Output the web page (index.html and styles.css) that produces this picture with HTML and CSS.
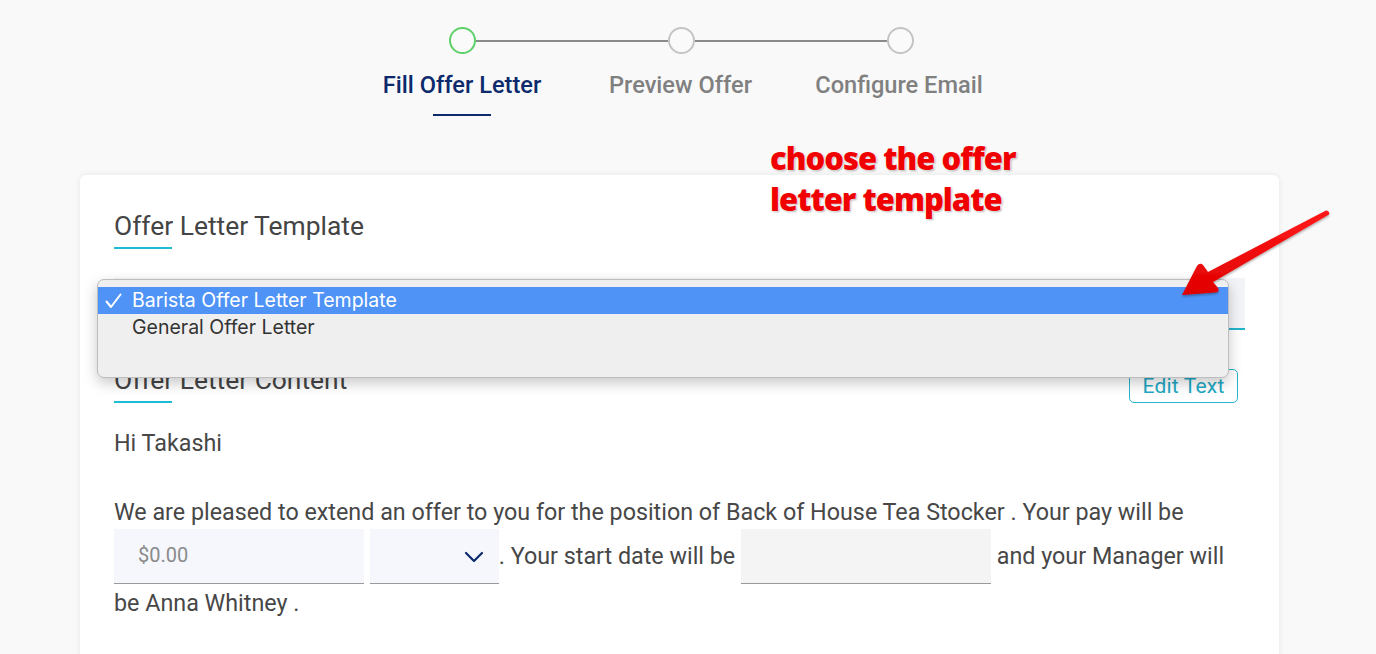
FILE: index.html
```html
<!DOCTYPE html>
<html>
<head>
<meta charset="utf-8">
<link rel="stylesheet" href="styles.css">
</head>
<body>
<div class="page">
  <div class="stepper">
    <div class="track">
      <span class="dot dot-active"></span>
      <span class="link"></span>
      <span class="dot"></span>
      <span class="link"></span>
      <span class="dot"></span>
    </div>
    <div class="labels">
      <div class="label label-active">Fill Offer Letter<span class="bar"></span></div>
      <div class="label">Preview Offer</div>
      <div class="label">Configure Email</div>
    </div>
  </div>

  <div class="card">
    <h2 class="section-title">Offer Letter Template</h2>
    <div class="template-select"></div>

    <div class="content-head">
      <h2 class="section-title">Offer Letter Content</h2>
      <button class="edit-btn">Edit Text</button>
    </div>

    <div class="letter">
      <p class="greet">Hi Takashi</p>
      <p class="body-text">We are pleased to extend an offer to you for the position of Back of House Tea Stocker . Your pay will be <span class="field field-pay">$0.00</span> <span class="field field-unit"><svg class="chev" width="20" height="12" viewBox="0 0 20 12"><path d="M2 2 L10 10 L18 2" fill="none" stroke="#0b2a6a" stroke-width="2.2" stroke-linecap="round" stroke-linejoin="round"/></svg></span>. Your start date will be <span class="field field-date"></span> and your Manager will be Anna Whitney .</p>
    </div>

    <div class="popup">
      <div class="opt opt-sel"><svg class="check" width="17" height="16" viewBox="0 0 17 16"><path d="M1.5 8.5 L6 14 L15.5 1.5" fill="none" stroke="#fff" stroke-width="2" stroke-linecap="round" stroke-linejoin="round"/></svg>Barista Offer Letter Template</div>
      <div class="opt">General Offer Letter</div>
    </div>
  </div>

  <div class="note">choose the offer<br>letter template</div>
  <svg class="arrow" width="180" height="110" viewBox="1160 200 180 110">
    <defs>
      <linearGradient id="rg" x1="0" y1="0" x2="0" y2="1">
        <stop offset="0" stop-color="#ff1a1a"/>
        <stop offset="1" stop-color="#e00000"/>
      </linearGradient>
      <filter id="sh" x="-20%" y="-20%" width="140%" height="140%">
        <feDropShadow dx="0" dy="1.5" stdDeviation="1.2" flood-color="#000" flood-opacity="0.35"/>
      </filter>
    </defs>
    <path d="M1182 295 L1197 266 Q1200 262 1203 265 L1208 272 L1326 210.5 Q1330 211 1329 214.5 L1213 282 L1218 288 Q1220 292 1215 292.5 Z" fill="url(#rg)" filter="url(#sh)"/>
  </svg>
</div>
</body>
</html>
```

FILE: styles.css
```css
* { box-sizing: border-box; }
html, body { margin: 0; padding: 0; }
body {
  background: #f9f9fa;
  font-family: Roboto, "Liberation Sans", sans-serif;
  color: #464646;
  width: 1376px;
  height: 654px;
  overflow: hidden;
}
.page { position: relative; height: 654px; }

.stepper { padding-top: 27px; margin-left: 353px; width: 655px; }
.track { display: flex; align-items: center; padding-left: 96px; }
.dot {
  width: 27px; height: 27px; border-radius: 50%;
  border: 2px solid #c4c4c4; background: #fafafa; flex: none;
}
.dot-active { border-color: #5fd068; }
.link { width: 192px; height: 2px; background: #8a8a8a; flex: none; }
.labels { display: flex; margin-top: 18px; }
.label {
  width: 218px; text-align: center; font-size: 23.6px; font-weight: 500;
  color: #808080; line-height: 26px; position: relative; white-space: nowrap;
}
.label-active { color: #0c2a6c; }
.label:nth-child(2) { width: 219px; }
.bar {
  display: block; width: 58px; height: 2px; background: #0c2a6c;
  margin: 16px auto 0;
}

.card {
  position: relative;
  margin: 59px 0 0 80px;
  width: 1199px;
  height: 520px;
  background: #fff;
  border-radius: 6px;
  box-shadow: 0 0 6px rgba(0,0,0,0.08);
  padding: 37px 34px 0 34px;
}
.section-title {
  margin: 0; font-size: 26.4px; font-weight: 400; line-height: 28px; color: #444;
}
.section-title::after {
  content: ""; display: block; width: 58px; height: 2px; background: #1cbcd4;
  margin-top: 7px;
}
.template-select {
  margin-top: 29px;
  height: 52px;
  width: 1131px;
  background: #f3f4f8;
  border-bottom: 2px solid #22b3cb;
}
.content-head {
  display: flex; justify-content: space-between; align-items: flex-start;
  margin-top: 36px;
}
.edit-btn {
  margin-top: 3px; margin-right: 7px;
  width: 109px; height: 34px;
  border: 1.5px solid #2ab3cc; border-radius: 5px;
  background: #fff; color: #1ea8c4;
  font-family: Roboto, sans-serif; font-size: 21px; font-weight: 400;
  padding: 0; letter-spacing: 0.2px;
}
.letter { font-size: 23.3px; color: #474747; }
.letter p { margin: 0; line-height: 44px; }
.greet { margin-top: 18px !important; }
.body-text { margin-top: 25px !important; width: 1131px; }
.field {
  display: inline-block; vertical-align: middle; height: 55px;
  margin: -6px 0 -3px 0;
  border-bottom: 1.5px solid #9a9a9a; line-height: 52px;
  font-size: 20px; color: #8a8a8a;
}
.field-pay { width: 250px; background: #f5f7fd; padding-left: 24px; }
.field-unit { width: 129px; background: #f5f7fd; position: relative; }
.chev { position: absolute; right: 15px; top: 22px; }
.field-date { width: 250px; background: #f4f4f4; }

.popup {
  position: absolute; left: 17px; top: 104px;
  width: 1132px; height: 99px;
  background: #efefef;
  border: 1px solid #bdbdbd;
  border-radius: 7px;
  box-shadow: 0 5px 14px rgba(0,0,0,0.22);
  padding-top: 7px;
  font-family: Inter, "Liberation Sans", sans-serif;
  font-size: 19.5px;
  color: #333;
}
.opt { height: 27px; line-height: 27px; padding-left: 34px; position: relative; }
.opt-sel { background: #4f93f6; color: #fff; }
.check { position: absolute; left: 7px; top: 6px; }

.note {
  position: absolute; left: 770px; top: 138px;
  font-family: "Open Sans", sans-serif; font-weight: 800; font-size: 31px;
  line-height: 41px; color: #f00000; letter-spacing: -1px;
  text-shadow: 0 0 2px #fff, 0 0 2px #fff, 1px 1px 2px rgba(0,0,0,0.4);
}
.arrow { position: absolute; left: 1160px; top: 200px; }
```
